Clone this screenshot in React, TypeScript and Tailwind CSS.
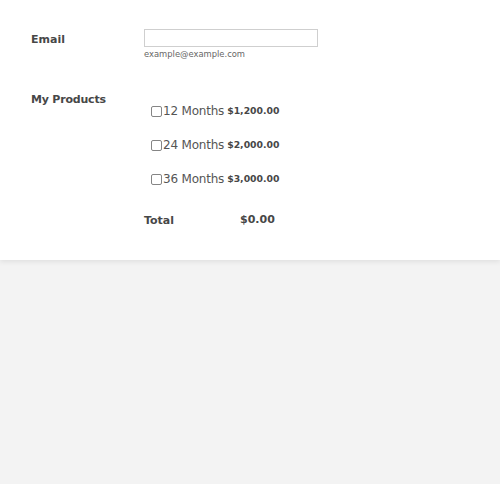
import { useState } from 'react';

const products = [
  { id: 12, label: '12 Months', price: 1200 },
  { id: 24, label: '24 Months', price: 2000 },
  { id: 36, label: '36 Months', price: 3000 },
];

const fmt = (n: number) =>
  '$' + n.toLocaleString('en-US', { minimumFractionDigits: 2, maximumFractionDigits: 2 });

export default function App() {
  const [email, setEmail] = useState('');
  const [checked, setChecked] = useState<number[]>([]);

  const toggle = (id: number) =>
    setChecked((c) => (c.includes(id) ? c.filter((x) => x !== id) : [...c, id]));

  const total = products.filter((p) => checked.includes(p.id)).reduce((s, p) => s + p.price, 0);

  return (
    <div className="min-h-screen bg-[#f3f3f3] font-['DejaVu_Sans',Verdana,sans-serif]">
      <div className="h-[260px] bg-white pt-[29px] pl-[31px] shadow-[0_2px_5px_rgba(0,0,0,0.08)]">
        {/* email */}
        <div className="flex">
          <label className="w-[113px] pt-[4px] text-[11px] leading-[13px] font-bold text-[#474747]">Email</label>
          <div>
            <input
              type="email"
              value={email}
              onChange={(e) => setEmail(e.target.value)}
              className="block h-[18px] w-[174px] border border-[#cfcfcf] bg-white px-1 text-[11px] outline-none"
            />
            <p className="mt-[2px] text-[8.4px] leading-[11px] text-[#666]">example@example.com</p>
          </div>
        </div>

        {/* products */}
        <div className="mt-[33px] flex">
          <span className="w-[113px] text-[11px] leading-[13px] font-bold tracking-[-0.2px] text-[#474747]">My Products</span>
          <ul className="mt-[1px] pl-[7px]">
            {products.map((p) => (
              <li key={p.id} className="flex h-[34px] items-center">
                <button
                  type="button"
                  onClick={() => toggle(p.id)}
                  className="mr-[1px] flex h-[11px] w-[11px] items-center justify-center rounded-[2px] border border-[#858585] bg-white"
                >
                  {checked.includes(p.id) && <span className="h-[5px] w-[5px] bg-[#555]" />}
                </button>
                <span className="text-[12px] leading-[14px] tracking-[-0.2px] text-[#555]">{p.label}</span>
                <span className="ml-[3px] text-[9.3px] leading-[14px] font-bold text-[#474747]">{fmt(p.price)}</span>
              </li>
            ))}
          </ul>
        </div>

        {/* total */}
        <div className="mt-[18px] ml-[113px] flex">
          <span className="w-[96px] text-[11px] leading-[13px] font-bold text-[#474747]">Total</span>
          <span className="-mt-[1px] text-[11px] leading-[13px] font-bold text-[#474747]">{fmt(total)}</span>
        </div>
      </div>
    </div>
  );
}
